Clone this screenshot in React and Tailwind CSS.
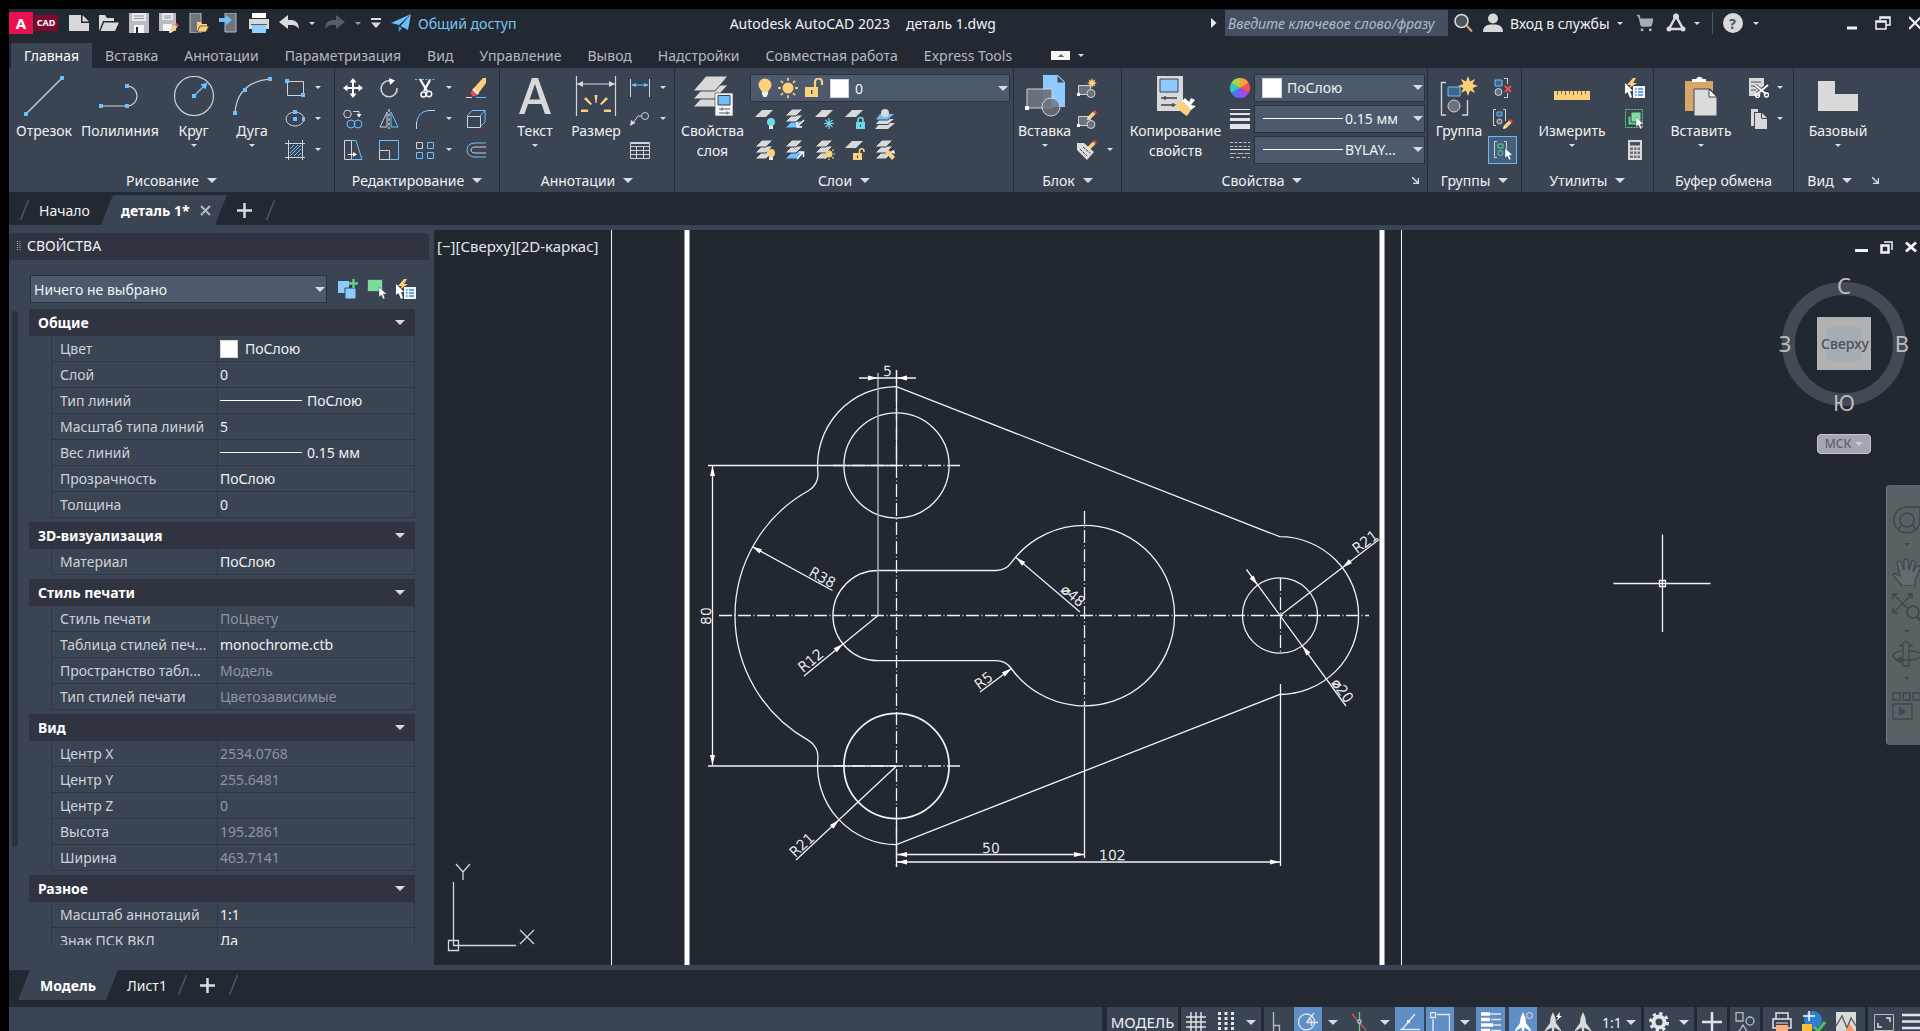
import { ShoppingCart } from "lucide-react"

/* ---------- small shared pieces ---------- */

function Ico({ w = 20, h = 20, box, className = "", children }) {
  return (
    <svg
      width={w}
      height={h}
      viewBox={box || `0 0 ${w} ${h}`}
      fill="none"
      stroke="none"
      aria-hidden="true"
      className={`shrink-0 ${className}`}
    >
      {children}
    </svg>
  )
}

function Caret({ size = 8, className = "text-[#d9dce0]" }) {
  return (
    <svg width={size} height={size / 2} viewBox="0 0 8 4" aria-hidden="true" className={`shrink-0 ${className}`}>
      <path d="M0 0H8L4 4Z" fill="currentColor" />
    </svg>
  )
}

function Tool({ label, className = "", children }) {
  return (
    <button type="button" aria-label={label} className={`flex items-center justify-center ${className}`}>
      {children}
    </button>
  )
}

function Plus() {
  return (
    <Ico w={15} h={15}>
      <path d="M7.500 0V15M0 7.500H15" stroke="#d9dce0" strokeWidth="2.500" />
    </Ico>
  )
}

function Slash() {
  return (
    <Ico w={9} h={20}>
      <path d="M8.500 0L.5 20" stroke="#4d5664" strokeWidth="1.500" />
    </Ico>
  )
}

const Pencil = ({ x = 10, y = 10 }) => (
  <g transform={`translate(${x} ${y})`}>
    <path d="M0 10L1 6.500L6 1.500L8.500 4L3.500 9Z" fill="#fdd17c" />
    <path d="M6 1.500L7.500 0L10 2.500L8.500 4Z" fill="#ef4b56" />
    <path d="M0 10L1 6.500L3.500 9Z" fill="#f3ead7" />
  </g>
)

const Cursor = ({ x = 10, y = 8 }) => (
  <path
    transform={`translate(${x} ${y})`}
    d="M0 0V10L2.300 8L4.200 12L6 11.200L4.200 7.300L7.500 7.100Z"
    fill="#fff"
    stroke="#3b4453"
    strokeWidth=".4"
  />
)

const Star = ({ x, y, s = 1 }) => (
  <path
    transform={`translate(${x} ${y}) scale(${s})`}
    d="M0-10L2-4.500L7-7L4.600-2L10 0L4.600 2L7 7L2 4.500L0 10L-2 4.500L-7 7L-4.600 2L-10 0L-4.600-2L-7-7L-2-4.500Z"
    fill="#fdd17c"
  />
)

const Bulb = ({ x, y, fill = "#fdd17c" }) => (
  <g transform={`translate(${x} ${y})`}>
    <circle cx="4" cy="4" r="4" fill={fill} />
    <path d="M2 7.500H6V11H2Z" fill="#e8e8e8" />
  </g>
)

const Sun = ({ x, y, s = 1 }) => (
  <g transform={`translate(${x} ${y}) scale(${s})`}>
    <circle r="5" fill="#fdd17c" />
    <path
      d="M0-9V-6.500M0 9V6.500M-9 0H-6.500M9 0H6.500M-6.400-6.400L-4.600-4.600M6.400 6.400L4.600 4.600M-6.400 6.400L-4.600 4.600M6.400-6.400L4.600-4.600"
      stroke="#fdd17c"
      strokeWidth="1.600"
    />
  </g>
)

const Lock = ({ x, y, fill = "#fdd17c", open }) => (
  <g transform={`translate(${x} ${y})`}>
    <path d="M0 5H9V12H0Z" fill={fill} />
    <path d={open ? "M6.500 5V2.500A2.300 2.300 0 0 1 11 2.500V4" : "M2 5V3A2.500 2.500 0 0 1 7 3V5"} stroke={fill} strokeWidth="1.600" />
    <path d="M4 7.500H5V10H4Z" fill="#3b4453" />
  </g>
)

const Sheet = ({ y, fill = "#d9d9d9" }) => <path d={`M7 ${y}H18L11 ${y + 7}H0Z`} fill={fill} />

const Stack = ({ mid = "#d9d9d9" }) => (
  <g stroke="#3b4453" strokeWidth="1">
    <Sheet y={12} fill={mid} />
    <Sheet y={6} />
    <Sheet y={0} />
  </g>
)

/* ---------- title bar ---------- */

function TitleBar() {
  return (
    <header className="flex h-[34px] shrink-0 items-center bg-[#232932] pb-[6px] text-[14px] text-[#f0f2f4]">
      <div className="flex h-[22px] w-[49px] shrink-0 items-center">
        <span className="flex h-[22px] w-6 items-center justify-center bg-[#e8114f] text-[15px] font-bold text-white">A</span>
        <span className="ml-px flex h-4 w-6 items-center justify-center bg-[#7d0a2e] text-[9px] font-bold text-white">CAD</span>
      </div>

      <div className="ml-[11px] flex items-center gap-[10px]">
        <Tool label="Создать">
          <Ico>
            <path d="M0 2H12V10H20V18H0Z" fill="#d9d9d9" />
            <path d="M13.500 2L20 8.500H13.500Z" fill="#d9d9d9" />
          </Ico>
        </Tool>
        <Tool label="Открыть">
          <Ico>
            <path d="M0 18V2H6L8 5H15V8H4Z" fill="#d9d9d9" />
            <path d="M5 9.500H20L16 18H1.500Z" fill="#d9d9d9" />
          </Ico>
        </Tool>
        <Tool label="Сохранить">
          <Ico>
            <path d="M0 0H3V8H17V0H20V20H0Z" fill="#b9bcc0" />
            <path d="M3 0H17V8H3Z" fill="#e9e9e9" />
            <path d="M5 3H15M5 5.500H15" stroke="#8f949b" />
            <path d="M5 12H15V20H5Z" fill="#f4f4f4" />
            <path d="M7 14H9V20H7Z" fill="#232932" />
          </Ico>
        </Tool>
        <Tool label="Сохранить как">
          <Ico>
            <path d="M0 0H17V18H0Z" fill="#b9bcc0" />
            <path d="M3 0H14V7H3Z" fill="#e9e9e9" />
            <path d="M5 3H12M5 5H12" stroke="#8f949b" />
            <path d="M4 11H13V18H4Z" fill="#f4f4f4" />
            <Pencil x={10} y={10} />
          </Ico>
        </Tool>
        <Tool label="Открыть с мобильных устройств">
          <Ico>
            <path d="M1 0H12V20H1Z" fill="#70757c" stroke="#b9bcc0" />
            <path d="M8 18V9H12L13 11H18V13H11Z" fill="#fdd17c" />
            <path d="M11 13H20L17 19H8Z" fill="#fdd17c" stroke="#232932" strokeWidth=".6" />
          </Ico>
        </Tool>
        <Tool label="Сохранить на мобильных устройствах">
          <Ico>
            <path d="M6 0H17V19H6Z" fill="#70757c" stroke="#b9bcc0" />
            <path d="M0 5H7V2L13 7L7 12V9H0Z" fill="#6cc0ff" />
          </Ico>
        </Tool>
        <Tool label="Печать">
          <Ico>
            <path d="M3 0H17V5H3Z" fill="#fff" />
            <path d="M0 6H20V16H0Z" fill="#d9d9d9" />
            <path d="M3 12H17V20H3Z" fill="#8fd0ff" />
            <path d="M2 11.500H18" stroke="#555c66" />
          </Ico>
        </Tool>
        <Tool label="Отменить">
          <Ico>
            <path d="M0 9L9 2V7H13Q20 8 20 16Q17 12 13 12H9V16Z" fill="#d9d9d9" />
          </Ico>
        </Tool>
        <Tool label="Список отмены">
          <Caret size={6} />
        </Tool>
        <Tool label="Повторить">
          <Ico>
            <path d="M20 9L11 2V7H7Q0 8 0 16Q3 12 7 12H11V16Z" fill="#565d67" />
          </Ico>
        </Tool>
        <Tool label="Список повтора">
          <Caret size={6} className="text-[#9a9fa7]" />
        </Tool>
        <Tool label="Адаптация панели">
          <Ico w={10} h={12}>
            <path d="M0 2H10" stroke="#d9d9d9" strokeWidth="2" />
            <path d="M0 5.500H10L5 11Z" fill="#d9d9d9" />
          </Ico>
        </Tool>
        <button type="button" className="flex items-center gap-[7px] text-[#7cc4f5]">
          <Ico>
            <path d="M0 10L20 1L8 12Z" fill="#6cc0ff" />
            <path d="M20 1L17 17L9.500 13Z" fill="#6cc0ff" />
            <path d="M7.500 13L8 19L11 15Z" fill="#4a9fdc" />
          </Ico>
          Общий доступ
        </button>
      </div>

      <h1 className="ml-auto flex gap-4 whitespace-nowrap">
        <span>Autodesk AutoCAD 2023</span>
        <span>деталь 1.dwg</span>
      </h1>

      <div className="ml-auto flex h-full w-[711px] shrink-0 items-center">
        <Ico w={6} h={10} className="ml-[2px]">
          <path d="M0 0V10L5.500 5Z" fill="#e8eaec" />
        </Ico>
        <input
          type="text"
          aria-label="Поиск"
          placeholder="Введите ключевое слово/фразу"
          className="ml-[8px] h-[26px] w-[223px] bg-[#454f62] px-[3px] italic outline-none placeholder:text-[#b4b9c2]"
        />
        <Tool label="Найти" className="ml-[6px]">
          <Ico>
            <circle cx="7.500" cy="8" r="6.500" fill="#4b535f" stroke="#d9d9d9" strokeWidth="1.600" />
            <path d="M13 13L18 18.500" stroke="#d7a878" strokeWidth="2" />
          </Ico>
        </Tool>
        <button type="button" className="ml-[9px] flex items-center gap-[7px] whitespace-nowrap">
          <Ico>
            <circle cx="10" cy="5.500" r="5" fill="#d9d9d9" />
            <path d="M0 19Q0 12 7 11.500H13Q20 12 20 19Z" fill="#d9d9d9" />
          </Ico>
          Вход в службы
          <Caret size={6} />
        </button>
        <Tool label="Магазин приложений" className="ml-[13px]">
          <ShoppingCart size={18} color="#a9adb3" fill="#a9adb3" strokeWidth={2} />
        </Tool>
        <Tool label="Autodesk" className="ml-[12px]">
          <Ico>
            <path d="M10 3L3 16H17Z" stroke="#d9d9d9" strokeWidth="2.500" />
            <circle cx="10" cy="3.500" r="3" fill="#d9d9d9" />
            <circle cx="3" cy="16" r="2.500" fill="#d9d9d9" />
            <circle cx="17" cy="16" r="2.500" fill="#d9d9d9" />
          </Ico>
        </Tool>
        <Caret size={6} className="ml-[8px] text-[#d9dce0]" />
        <span className="ml-[12px] h-[22px] w-px bg-[#4d5664]" />
        <Tool label="Справка" className="ml-[10px] h-5 w-5 rounded-full bg-[#d9d9d9] font-bold text-[#4b535f]">
          ?
        </Tool>
        <Caret size={6} className="ml-[10px] text-[#d9dce0]" />
        <div className="ml-auto flex shrink-0 items-center gap-[18px]">
          <Tool label="Свернуть">
            <Ico w={10} h={14}>
              <path d="M0 12H10" stroke="#f0f2f4" strokeWidth="3" />
            </Ico>
          </Tool>
          <Tool label="Восстановить">
            <Ico w={16} h={14}>
              <path d="M5 4V1H15V9H11M5 2H15M1 5H11V13H1ZM1 6H11" stroke="#f0f2f4" strokeWidth="1.500" />
            </Ico>
          </Tool>
          <Tool label="Закрыть">
            <Ico w={11} h={14}>
              <path d="M0 1L12 13M12 1L0 13" stroke="#f0f2f4" strokeWidth="2" />
            </Ico>
          </Tool>
        </div>
      </div>
    </header>
  )
}

const RIBBON_TABS = [
  "Главная",
  "Вставка",
  "Аннотации",
  "Параметризация",
  "Вид",
  "Управление",
  "Вывод",
  "Надстройки",
  "Совместная работа",
  "Express Tools",
]

function RibbonTabs() {
  return (
    <nav className="flex h-[25px] shrink-0 items-center bg-[#232932] pl-[2px] text-[14px]">
      {RIBBON_TABS.map((tab, i) => (
        <button
          key={tab}
          type="button"
          className={`h-full px-[13px] whitespace-nowrap ${i === 0 ? "bg-[#3b4453] text-white" : "text-[#b4b8bf]"}`}
        >
          {tab}
        </button>
      ))}
      <button type="button" aria-label="Свернуть ленту" className="ml-[26px] flex items-center gap-2">
        <span className="flex h-[9px] w-[19px] items-center justify-center bg-[#f4f4f4]">
          <Caret size={6} className="rotate-180 text-[#555c66]" />
        </span>
        <Caret size={6} />
      </button>
    </nav>
  )
}

/* ---------- ribbon ---------- */

function Panel({ title, width, caret = true, launcher, children }) {
  return (
    <section className={`flex shrink-0 flex-col border-r border-[#262c37] ${width}`}>
      <div className="flex h-[102px] pt-1">{children}</div>
      <div className="flex h-5 items-center justify-center">
        <button type="button" className="flex items-center gap-[8px] whitespace-nowrap">
          {title}
          {caret && <Caret size={10} />}
        </button>
        {launcher && (
          <Tool label={`Параметры: ${title}`} className={launcher}>
            <Ico w={7} h={7}>
              <path d="M0 0L6 6M6.500 1V6.500H1" stroke="#d9dce0" strokeWidth="1.400" />
            </Ico>
          </Tool>
        )}
      </div>
    </section>
  )
}

function BigButton({ label, width, caret, children }) {
  return (
    <button type="button" className={`flex shrink-0 flex-col items-center pt-1 ${width}`}>
      <span className="flex h-10 items-center">{children}</span>
      <span className="mt-[5px] text-center leading-5">{label}</span>
      {caret && <Caret className="mt-[3px] text-[#d9dce0]" size={6} />}
    </button>
  )
}

const SQ = "#6cc0ff"
const LN = "#d0d3d7"

function DrawPanel() {
  return (
    <Panel title="Рисование" width="w-[326px]">
      <BigButton label="Отрезок" width="ml-[3px] w-[64px]">
        <Ico w={40} h={40}>
          <path d="M2 38L38 2" stroke={LN} strokeWidth="1.200" />
          <path d="M0 36H4V40H0ZM36 0H40V4H36Z" fill={SQ} />
        </Ico>
      </BigButton>
      <BigButton label="Полилиния" width="w-[88px]">
        <Ico w={44} h={40}>
          <path d="M3 30H29A10 10 0 0 0 29 10" stroke={LN} strokeWidth="1.200" />
          <path d="M1 28H5V32H1ZM27 28H31V32H27ZM27 8H31V12H27Z" fill={SQ} />
        </Ico>
      </BigButton>
      <BigButton label="Круг" width="w-[59px]" caret>
        <Ico w={42} h={40}>
          <circle cx="21" cy="20" r="19.500" stroke={LN} strokeWidth="1.200" />
          <path d="M21 20L33 8" stroke={SQ} strokeWidth="1.500" />
          <path d="M19 18H23V22H19ZM34.500 6.500L27.500 8.500L32.500 13.500Z" fill={SQ} />
        </Ico>
      </BigButton>
      <BigButton label="Дуга" width="w-[58px]" caret>
        <Ico w={40} h={40}>
          <path d="M3 37Q5 6 38 3" stroke={LN} strokeWidth="1.200" />
          <path d="M1 35H5V39H1ZM36 1H40V5H36ZM11 12H15V16H11Z" fill={SQ} />
        </Ico>
      </BigButton>
      <div className="ml-[3px] grid grid-cols-[22px_24px] auto-rows-[31px] place-items-center">
        <Tool label="Прямоугольник">
          <Ico>
            <path d="M2.500 3.500H18.500V17.500H2.500Z" stroke={LN} />
            <path d="M0 1H4V5H0ZM16 15H20V19H16Z" fill={SQ} />
          </Ico>
        </Tool>
        <Caret size={6} />
        <Tool label="Эллипс">
          <Ico>
            <ellipse cx="10" cy="10" rx="9" ry="7" stroke={LN} />
            <path d="M8 1H12V5H8ZM8 8H12V12H8ZM17 8H20V12H17Z" fill={SQ} />
          </Ico>
        </Tool>
        <Caret size={6} />
        <Tool label="Штриховка">
          <Ico>
            <path d="M3.500 0V20M17.500 0V20M0 3.500H20M0 17.500H20" stroke={LN} />
            <path d="M5 9L9 5M5 13L13 5M5 16L16 5M9 16L16 9M13 16L16 13" stroke={SQ} />
          </Ico>
        </Tool>
        <Caret size={6} />
      </div>
    </Panel>
  )
}

function ModifyPanel() {
  return (
    <Panel title="Редактирование" width="w-[165px]">
      <div className="grid grid-cols-[36px_36px_35px_14px_40px] auto-rows-[31px] place-items-center">
        <Tool label="Перенести">
          <Ico>
            <path d="M10 0L13.500 4.500H11V9H15.500V6.500L20 10L15.500 13.500V11H11V15.500H13.500L10 20L6.500 15.500H9V11H4.500V13.500L0 10L4.500 6.500V9H9V4.500H6.500Z" fill="#fff" />
          </Ico>
        </Tool>
        <Tool label="Повернуть">
          <Ico>
            <path d="M12 3A8 8 0 1 0 18 10" stroke={LN} strokeWidth="1.600" />
            <path d="M10 0L16 2.500L11 7Z" fill="#fff" />
          </Ico>
        </Tool>
        <Tool label="Обрезать">
          <Ico>
            <path d="M0 1.500H20" stroke={SQ} strokeDasharray="2 1.500" />
            <path d="M5 1L12 13M15 2L9 13" stroke="#fff" strokeWidth="2.200" />
            <circle cx="14" cy="16" r="2.700" stroke="#fff" strokeWidth="1.500" />
            <circle cx="8.500" cy="16.500" r="2.500" stroke="#fff" strokeWidth="1.500" />
          </Ico>
        </Tool>
        <Caret size={6} />
        <Tool label="Стереть">
          <Ico>
            <path d="M7 11L17 0H20V5L12 16Z" fill="#fdd17c" />
            <path d="M7 11L12 16L9 18.500Q6 19 4.500 15Z" fill="#ef4b56" />
            <path d="M7 11L12 16" stroke="#fff" strokeWidth="1.800" />
            <path d="M0 19.500H6" stroke={LN} />
            <path d="M10 19.500H20" stroke={SQ} />
          </Ico>
        </Tool>
        <Tool label="Копировать">
          <Ico>
            <circle cx="4.500" cy="5" r="3.800" stroke={LN} />
            <path d="M10 2.500H16V6" stroke={LN} />
            <path d="M13.500 5H18.500L16 8.500Z" fill="#fff" />
            <circle cx="8" cy="15" r="4" stroke={SQ} />
            <circle cx="15" cy="15" r="4" stroke={SQ} />
          </Ico>
        </Tool>
        <Tool label="Зеркало">
          <Ico>
            <path d="M8 3V18H1Z" stroke={LN} />
            <path d="M12 3V18H19Z" stroke={SQ} />
            <path d="M10 0V20" stroke="#fff" strokeDasharray="3 1.500" />
          </Ico>
        </Tool>
        <Tool label="Сопряжение">
          <Ico>
            <path d="M1.500 14Q3 2 14 1.500" stroke={SQ} />
            <path d="M1.500 20V13M13 1.500H20" stroke={LN} />
          </Ico>
        </Tool>
        <Caret size={6} />
        <Tool label="Выдавить">
          <Ico>
            <path d="M1 7L6 1.500H19V13L14 18M14 7L19 1.500" stroke={SQ} />
            <path d="M1.500 7.500H14.500V18.500H1.500Z" stroke={LN} />
          </Ico>
        </Tool>
        <Tool label="Растянуть">
          <Ico>
            <path d="M1.500 .5H8.500V19.500H1.500Z" stroke={LN} />
            <path d="M8.500 .5H13L19 19.500H8.500" stroke={SQ} />
            <path d="M5 14.500H11" stroke="#fff" />
            <path d="M10 12V17L14 14.500Z" fill="#fff" />
          </Ico>
        </Tool>
        <Tool label="Масштаб">
          <Ico>
            <path d="M.5 10V.5H19.500V19.500H10" stroke={SQ} />
            <path d="M.5 10.500H10.500V19.500H.5Z" stroke={LN} />
          </Ico>
        </Tool>
        <Tool label="Массив">
          <Ico>
            <path d="M1.500 2.500H7.500V8.500H1.500Z" stroke={LN} />
            <path d="M12.500 2.500H18.500V8.500H12.500ZM1.500 12.500H7.500V18.500H1.500ZM12.500 12.500H18.500V18.500H12.500Z" stroke={SQ} />
          </Ico>
        </Tool>
        <Caret size={6} />
        <Tool label="Подобие">
          <Ico>
            <path d="M20 3H8Q1 4 1 10Q1 16 8 17H20" stroke={SQ} />
            <path d="M20 7H10Q5 7 5 10Q5 13 10 13H20" stroke={LN} />
          </Ico>
        </Tool>
      </div>
    </Panel>
  )
}

function AnnotationPanel() {
  return (
    <Panel title="Аннотации" width="w-[175px]">
      <BigButton label="Текст" width="ml-[5px] w-[60px]" caret>
        <Ico w={34} h={40}>
          <path d="M1 38L14 2H20L33 38H27L23.500 28H10L6.500 38ZM11.500 23.500H22L17 8Z" fill="#d9d9d9" />
        </Ico>
      </BigButton>
      <BigButton label="Размер" width="w-[62px]">
        <Ico w={42} h={40}>
          <path d="M1.500 0V40M40.500 0V40M2 8H40" stroke={LN} strokeWidth="1.200" />
          <path d="M2 8L8 5V11ZM40 8L34 5V11Z" fill="#d9d9d9" />
          <path d="M6 33.500H13V36H6ZM29 33.500H36V36H29ZM19.500 19H22.500L21.500 27H20.500ZM9 23L11 21L17 28L15.500 29ZM33 23L31 21L25 28L26.500 29Z" fill="#fdd17c" />
        </Ico>
      </BigButton>
      <div className="grid grid-cols-[26px_20px] auto-rows-[31px] place-items-center">
        <Tool label="Линейный размер">
          <Ico>
            <path d="M.5 1V19M19.500 1V19" stroke={LN} />
            <path d="M2 7H18" stroke={SQ} />
            <path d="M1 7L6 5V9ZM19 7L14 5V9Z" fill={SQ} />
          </Ico>
        </Tool>
        <Caret size={6} />
        <Tool label="Выноска">
          <Ico>
            <circle cx="15" cy="7" r="3.500" stroke={LN} />
            <path d="M12 7H8L3 14" stroke={LN} />
            <path d="M0 17L1 11L5.500 14Z" fill="#d9d9d9" />
          </Ico>
        </Tool>
        <Caret size={6} />
        <Tool label="Таблица">
          <Ico>
            <path d="M.5 2.500H19.500V18.500H.5ZM.5 6.500H19.500M.5 10.500H19.500M.5 14.500H19.500M6.500 6V18M13.500 6V18" stroke={LN} />
            <path d="M1 3H19" stroke={LN} strokeWidth="2" />
          </Ico>
        </Tool>
      </div>
    </Panel>
  )
}

const LAYER_TOOLS = [
  ["Отключить слой", <g key="a"><Sheet y={1} /><Bulb x={12} y={9} fill="#6edbe8" /></g>],
  ["Изолировать", <g key="b"><Stack mid="#6cc0ff" /><path d="M19 11L12 18M12 13V18H17" stroke="#fff" strokeWidth="1.400" /></g>],
  ["Заморозить", <g key="c"><Sheet y={1} /><path d="M14 9V20M9 14.500H19M10.500 11L17.500 18M17.500 11L10.500 18" stroke="#6edbe8" strokeWidth="1.200" /></g>],
  ["Блокировать", <g key="d"><Sheet y={1} /><Lock x={11} y={8} fill="#6edbe8" /></g>],
  ["Сделать текущим", <g key="e"><path d="M5 14H20L13 20H0Z" fill="#d9d9d9" /><path d="M5 9.500H20L13 15.500H0Z" fill="#d9d9d9" stroke="#3b4453" /><path d="M5 4.500H20L13 11H0Z" fill="#6cc0ff" stroke="#3b4453" /><circle cx="10" cy="4" r="4" fill="#d9d9d9" /></g>],
  ["Включить все слои", <g key="f"><Stack /><Bulb x={12} y={9} /></g>],
  ["Отменить изоляцию", <g key="g"><Stack mid="#6cc0ff" /><path d="M12 19L18 12M13.500 12H18.500V17" stroke="#fff" strokeWidth="1.400" /></g>],
  ["Разморозить все", <g key="h"><Stack /><Sun x={14} y={14} s={0.7} /></g>],
  ["Разблокировать", <g key="i"><Sheet y={1} /><Lock x={8} y={8} open /></g>],
  ["Копировать свойства слоя", <g key="j"><Stack /><path d="M10 12L14 10L20 17L17 20Z" fill="#fdd17c" /><path d="M15 12L19 10L20 14Z" fill="#fff" /></g>],
]

function Swatch({ className = "h-[20px] w-[20px]" }) {
  return <span className={`shrink-0 border border-[#d0d3d7] bg-white ${className}`} />
}

function Picker({ label, value, className = "", children }) {
  return (
    <div className={`relative flex h-7 items-center border border-[#2a313d] bg-[#4d596c] ${className}`}>
      {children}
      <select aria-label={label} defaultValue={value} className="h-full min-w-0 flex-1 appearance-none bg-transparent text-[#f0f2f4] outline-none">
        <option>{value}</option>
      </select>
      <Caret size={10} className="pointer-events-none absolute right-px text-[#d9dce0]" />
    </div>
  )
}

function LayersPanel() {
  return (
    <Panel title="Слои" width="w-[339px]">
      <BigButton label={<>Свойства<br />слоя</>} width="w-[75px]">
        <Ico w={40} h={40}>
          <g fill="#d9d9d9" stroke="#3b4453">
            <path d="M13 17H35L22 31H0Z" />
            <path d="M13 9H35L22 23H0Z" />
            <path d="M13 0H35L22 15H0Z" />
          </g>
          <path d="M22 17H40V40H22Z" fill="#f4f4f4" stroke="#3b4453" strokeWidth=".6" />
          <path d="M25 19.500H37V29H25Z" fill="#6cc0ff" stroke="#3b4453" />
          <path d="M26 33H37M26 37H37M29 31.500V34.500M34 35.500V38.500" stroke="#555c66" />
        </Ico>
      </BigButton>
      <div className="flex flex-col">
        <Picker label="Слой" value="0" className="mt-[2px] w-[260px] gap-[6px] pl-[7px]">
          <Ico w={14} h={20}>
            <circle cx="7" cy="7" r="6.500" fill="#fdd17c" />
            <path d="M4 14H10V16L8.500 19H5.500L4 16Z" fill="#f4f4f4" />
            <path d="M3.500 11H10.500V14H3.500Z" fill="#fdd17c" />
          </Ico>
          <Ico>
            <Sun x={10} y={10} s={1.1} />
          </Ico>
          <Ico>
            <path d="M1 9H14V19H1Z" fill="#fdd17c" />
            <path d="M11 9V4A3.500 3.500 0 0 1 18 4V7" stroke="#fdd17c" strokeWidth="2.200" />
            <path d="M7 12H8.500V16H7Z" fill="#4d596c" />
          </Ico>
          <Swatch className="h-[19px] w-[19px]" />
        </Picker>
        <div className="mt-px grid w-[150px] grid-cols-5 auto-rows-[31px] place-items-center">
          {LAYER_TOOLS.map(([label, icon]) => (
            <Tool key={label} label={label}>
              <Ico>{icon}</Ico>
            </Tool>
          ))}
        </div>
      </div>
    </Panel>
  )
}

const MiniBlock = () => (
  <g>
    <path d="M1.500 7.500H13.500V16.500H1.500Z" fill="#6d737d" stroke={LN} />
    <circle cx="14" cy="15.500" r="4" fill="#6d737d" stroke={LN} />
    <path d="M0 15H3V18H0Z" fill="#fff" />
  </g>
)

function BlockPanel() {
  return (
    <Panel title="Блок" width="w-[108px]">
      <BigButton label="Вставка" width="w-[61px]" caret>
        <Ico w={42} h={42}>
          <path d="M19 0H34L41 7V32H19Z" fill="#8ccaff" />
          <path d="M33 0V8H41Z" fill="#3b4453" stroke="#8ccaff" />
          <path d="M3 14H28V33H3Z" fill="#6d737d" fillOpacity=".95" stroke={LN} />
          <circle cx="27" cy="32" r="9" fill="#6d737d" fillOpacity=".8" stroke={LN} />
          <path d="M1 31H5V35H1Z" fill="#fff" />
        </Ico>
      </BigButton>
      <div className="ml-px grid grid-cols-[22px_24px] auto-rows-[31px] place-items-center">
        <Tool label="Создать блок">
          <Ico>
            <MiniBlock />
            <Star x={15} y={5} s={0.5} />
          </Ico>
        </Tool>
        <span />
        <Tool label="Редактор блоков">
          <Ico>
            <MiniBlock />
            <Pencil x={10} y={1} />
          </Ico>
        </Tool>
        <span />
        <Tool label="Атрибуты">
          <Ico>
            <path d="M0 3H7L17 12L10 20L0 10Z" fill="#d9d9d9" />
            <path d="M3 9L10 16M6 7L13 13" stroke="#3b4453" strokeDasharray="3 1" />
            <Pencil x={10} y={0} />
          </Ico>
        </Tool>
        <Caret size={6} />
      </div>
    </Panel>
  )
}

function PropertiesPanel() {
  return (
    <Panel title="Свойства" width="w-[306px]" launcher="ml-[110px] -mr-[92px]">
      <BigButton label={<>Копирование<br />свойств</>} width="w-[107px]">
        <Ico w={42} h={40}>
          <path d="M2 0H28V35H2Z" fill="#d9d9d9" />
          <path d="M5 3H23V16H5Z" fill="#8ccaff" stroke="#3b4453" />
          <path d="M6 22H22M6 29H22M10 20V24M18 27V31" stroke="#3b4453" strokeWidth="1.400" />
          <path d="M20 29L27 25L36 34L32 40Q25 36 20 29Z" fill="#fdd17c" />
          <path d="M27 25L36 34L41 30L36 29L40 24L36 22L34 26L30 22Z" fill="#fff" />
        </Ico>
      </BigButton>
      <div className="ml-px grid grid-cols-[24px_171px] auto-rows-[31px] items-center">
        <Ico>
          <path d="M10 10L10 0A10 10 0 0 1 18.700 5Z" fill="#ff9d3c" />
          <path d="M10 10L18.700 5A10 10 0 0 1 18.700 15Z" fill="#f0565b" />
          <path d="M10 10L18.700 15A10 10 0 0 1 10 20Z" fill="#a04df0" />
          <path d="M10 10V20A10 10 0 0 1 1.300 15Z" fill="#5a6cf0" />
          <path d="M10 10L1.300 15A10 10 0 0 1 1.300 5Z" fill="#33c6c9" />
          <path d="M10 10L1.300 5A10 10 0 0 1 10 0Z" fill="#a6d845" />
        </Ico>
        <Picker label="Цвет" value="ПоСлою" className="gap-[5px] pl-[7px]">
          <Swatch />
        </Picker>
        <Ico>
          <path d="M0 .5H20" stroke="#e3e5e8" />
          <path d="M0 5H20" stroke="#e3e5e8" strokeWidth="2" />
          <path d="M0 10.500H20" stroke="#e3e5e8" strokeWidth="3" />
          <path d="M0 17.500H20" stroke="#e3e5e8" strokeWidth="5" />
        </Ico>
        <Picker label="Вес линий" value="0.15 мм" className="gap-[2px] pl-[8px]">
          <span className="h-px w-20 shrink-0 bg-white" />
        </Picker>
        <Ico>
          <path d="M0 2.500H20M0 6.500H20" stroke="#b9bcc0" strokeDasharray="3 1.500" />
          <path d="M0 9.500H20" stroke="#e3e5e8" />
          <path d="M0 13.500H20" stroke="#b9bcc0" strokeDasharray="6 1.500" />
          <path d="M0 17.500H20" stroke="#b9bcc0" strokeDasharray="4 2" />
        </Ico>
        <Picker label="Тип линий" value="BYLAY..." className="gap-[2px] pl-[8px]">
          <span className="h-px w-20 shrink-0 bg-white" />
        </Picker>
      </div>
    </Panel>
  )
}

function GroupsPanel() {
  return (
    <Panel title="Группы" width="w-[94px]">
      <BigButton label="Группа" width="ml-[2px] w-[58px]">
        <Ico w={40} h={40}>
          <path d="M7 6.500H2.500V39H7M23 39H28.500V24" stroke={LN} strokeWidth="1.400" />
          <path d="M9 11H21V20H9Z" fill="#3f6385" stroke={SQ} />
          <circle cx="15" cy="30" r="6" fill="#6d737d" stroke={LN} />
          <Star x={29} y={10} />
        </Ico>
      </BigButton>
      <div className="grid auto-rows-[31px] place-items-center">
        <Tool label="Разгруппировать" className="w-[29px]">
          <Ico>
            <path d="M2 2H9V8H2Z" fill="#3f6385" stroke={SQ} />
            <circle cx="5.500" cy="14" r="3.500" fill="#6d737d" stroke={LN} />
            <path d="M11 .5H14.500V6M11 19.500H14.500V15" stroke={LN} />
            <path d="M12 8L18 14M18 8L12 14" stroke="#ef4b56" strokeWidth="2.200" />
          </Ico>
        </Tool>
        <Tool label="Редактировать группу" className="w-[29px]">
          <Ico>
            <path d="M3 .5H.5V16.500H3M10 .5H12.500V12" stroke={LN} />
            <path d="M4 3H9V7H4Z" fill="#3f6385" stroke={SQ} />
            <circle cx="6.500" cy="12.500" r="2.500" fill="#6d737d" stroke={LN} />
            <Pencil x={10} y={10} />
          </Ico>
        </Tool>
        <Tool label="Выбор групп" className="h-[28px] w-[29px] border border-[#6cb8f0] bg-[#46607c]">
          <Ico>
            <path d="M4 1.500H1.500V17.500H4M11 1.500H13.500V9" stroke={LN} />
            <path d="M5 4H10V8H5Z" stroke="#62d28a" />
            <circle cx="7.500" cy="13" r="2.500" stroke="#62d28a" />
            <Cursor x={12} y={8} />
          </Ico>
        </Tool>
      </div>
    </Panel>
  )
}

const QuickSelect = () => (
  <g>
    <path d="M8 0L2 7H6L3 11L12 5H8L11 0Z" fill="#fdd17c" />
    <path d="M0 5V16L2.500 14L5 20L7 19L5 13H8Z" fill="#fff" />
    <path d="M8 8H20V20H8Z" fill="#f4f4f4" />
    <path d="M10 11H11.500M10 14H11.500M10 17H11.500M13 11H18M13 14H18M13 17H18" stroke="#2f8fe0" strokeWidth="1.400" />
  </g>
)

function UtilitiesPanel() {
  return (
    <Panel title="Утилиты" width="w-[132px]">
      <BigButton label="Измерить" width="w-[100px]" caret>
        <Ico w={36} h={10}>
          <path d="M0 0H36V9H0Z" fill="#fdd17c" />
          <path d="M3.500 0V4M7.500 0V3M11.500 0V4M15.500 0V3M19.500 0V4M23.500 0V3M27.500 0V4M31.500 0V3" stroke="#7d6a44" />
        </Ico>
      </BigButton>
      <div className="ml-[3px] grid auto-rows-[31px] place-items-center">
        <Tool label="Быстрый выбор">
          <Ico>
            <QuickSelect />
          </Ico>
        </Tool>
        <Tool label="Выбрать все">
          <Ico>
            <path d="M.5 .5H17.500V18.500H.5Z" stroke="#62d28a" strokeDasharray="2 1" />
            <path d="M3 7H12V16H3Z" fill="#62d28a" stroke="#3b4453" />
            <path d="M6 3H16V13H6Z" fill="#7ee0a2" stroke="#3b4453" />
            <Cursor x={11} y={8} />
          </Ico>
        </Tool>
        <Tool label="Калькулятор">
          <Ico>
            <path d="M3 0H17V20H3Z" fill="#d9d9d9" />
            <path d="M5 2H15V5.500H5Z" fill="#4b535f" />
            <path d="M5 7.500H8V10H5ZM9 7.500H11.500V10H9ZM12.500 7.500H15V10H12.500ZM5 11.500H8V14H5ZM9 11.500H11.500V14H9ZM12.500 11.500H15V14H12.500ZM5 15.500H8V18H5ZM9 15.500H11.500V18H9ZM12.500 15.500H15V18H12.500Z" fill="#6d737d" />
          </Ico>
        </Tool>
      </div>
    </Panel>
  )
}

function ClipboardPanel() {
  return (
    <Panel title="Буфер обмена" width="w-[140px]" caret={false}>
      <BigButton label="Вставить" width="w-[94px]" caret>
        <Ico w={34} h={40}>
          <path d="M1 5H29V35H1Z" fill="#d6a66d" />
          <path d="M8 6V3H12Q14 0 17 1L19 3H22V6Z" fill="#fff" />
          <path d="M10 13H26L33 20V40H10Z" fill="#dcdcdc" stroke="#3b4453" />
          <path d="M25 13V21H33Z" fill="#fff" stroke="#3b4453" />
        </Ico>
      </BigButton>
      <div className="grid grid-cols-[22px_20px] auto-rows-[31px] place-items-center">
        <Tool label="Вырезать">
          <Ico>
            <path d="M0 0H15V10L10 18H0Z" fill="#d9d9d9" />
            <path d="M2 4H12M2 8H8M2 12H7" stroke="#4b535f" />
            <path d="M6 7L17 16M18 7L8 16" stroke="#3b4453" strokeWidth="3.500" />
            <path d="M6 7L17 16M19 7L8 16" stroke="#fff" strokeWidth="1.800" />
            <circle cx="8.500" cy="17.500" r="2" stroke="#fff" strokeWidth="1.400" />
            <circle cx="17.500" cy="17" r="2" stroke="#fff" strokeWidth="1.400" />
          </Ico>
        </Tool>
        <Caret size={6} />
        <Tool label="Копировать в буфер">
          <Ico>
            <path d="M2 0H9V3H5V17H2Z" fill="#d9d9d9" />
            <path d="M6 4H13L18 9V20H6Z" fill="#d9d9d9" />
            <path d="M12.500 4V9.500H18" stroke="#3b4453" />
          </Ico>
        </Tool>
        <Caret size={6} />
      </div>
    </Panel>
  )
}

function Ribbon() {
  return (
    <div className="flex h-[124px] shrink-0 overflow-hidden bg-[#3b4453] text-[14px] text-[#f0f2f4]">
      <DrawPanel />
      <ModifyPanel />
      <AnnotationPanel />
      <LayersPanel />
      <BlockPanel />
      <PropertiesPanel />
      <GroupsPanel />
      <UtilitiesPanel />
      <ClipboardPanel />
      <Panel title="Вид" width="w-[98px] border-r-0" launcher="ml-5">
        <BigButton label="Базовый" width="w-[88px]" caret>
          <Ico w={40} h={40}>
            <path d="M0 5H17V18H40V35H0Z" fill="#d9d9d9" />
          </Ico>
        </BigButton>
      </Panel>
    </div>
  )
}

function FileTabs() {
  return (
    <nav className="flex h-[33px] shrink-0 items-end bg-[#232932] text-[14px] text-[#f0f2f4]">
      <div className="flex h-[30px] items-center">
        <span className="ml-[11px]">
          <Slash />
        </span>
        <button type="button" className="ml-[10px] w-[62px] text-left">
          Начало
        </button>
        <div className="flex h-full w-[126px] items-center bg-[#3b4453] pl-5 [clip-path:polygon(12px_0,100%_0,calc(100%-12px)_100%,0_100%)]">
          <button type="button" className="font-bold text-white">
            деталь 1*
          </button>
          <Tool label="Закрыть вкладку" className="ml-[10px]">
            <Ico w={11} h={11}>
              <path d="M1 1L10 10M10 1L1 10" stroke="#b4b8bf" strokeWidth="2" />
            </Ico>
          </Tool>
        </div>
        <Tool label="Новый чертеж" className="ml-[10px]">
          <Plus />
        </Tool>
        <span className="ml-[14px]">
          <Slash />
        </span>
      </div>
    </nav>
  )
}

/* ---------- properties palette ---------- */

const LineSample = () => <span className="h-px w-[82px] shrink-0 bg-white" />

const SECTIONS = [
  {
    title: "Общие",
    rows: [
      { name: "Цвет", value: "ПоСлою", lead: <Swatch className="mr-[2px] h-[18px] w-[18px]" /> },
      { name: "Слой", value: "0" },
      { name: "Тип линий", value: "ПоСлою", lead: <LineSample /> },
      { name: "Масштаб типа линий", value: "5" },
      { name: "Вес линий", value: "0.15 мм", lead: <LineSample /> },
      { name: "Прозрачность", value: "ПоСлою" },
      { name: "Толщина", value: "0" },
    ],
  },
  { title: "3D-визуализация", rows: [{ name: "Материал", value: "ПоСлою" }] },
  {
    title: "Стиль печати",
    rows: [
      { name: "Стиль печати", value: "ПоЦвету", dim: true },
      { name: "Таблица стилей печ...", value: "monochrome.ctb" },
      { name: "Пространство табл...", value: "Модель", dim: true },
      { name: "Тип стилей печати", value: "Цветозависимые", dim: true },
    ],
  },
  {
    title: "Вид",
    rows: [
      { name: "Центр X", value: "2534.0768", dim: true },
      { name: "Центр Y", value: "255.6481", dim: true },
      { name: "Центр Z", value: "0", dim: true },
      { name: "Высота", value: "195.2861", dim: true },
      { name: "Ширина", value: "463.7141", dim: true },
    ],
  },
  {
    title: "Разное",
    rows: [
      { name: "Масштаб аннотаций", value: "1:1" },
      { name: "Знак ПСК ВКЛ", value: "Да" },
    ],
  },
]

function PropertySection({ title, rows }) {
  return (
    <section>
      <button type="button" className="flex h-[27px] w-full items-center justify-between bg-[#2f3440] pr-[10px] pl-[9px] font-bold text-white">
        {title}
        <Caret size={10} />
      </button>
      <table className="ml-[22px] w-[364px] table-fixed border-separate border-spacing-0 border-l border-[#2f3744]">
        <tbody>
          {rows.map((row) => (
            <tr key={row.name} className="h-[26px]">
              <th scope="row" className="w-[166px] overflow-hidden border-r border-b border-[#2f3744] p-0 pl-2 text-left font-normal whitespace-nowrap text-[#cfd2d7]">
                {row.name}
              </th>
              <td className={`border-r border-b border-[#2f3744] p-0 pl-[2px] ${row.dim ? "text-[#8f959f]" : "text-[#f0f2f4]"}`}>
                <span className="flex h-[25px] items-center gap-[5px]">
                  {row.lead}
                  {row.value}
                </span>
              </td>
            </tr>
          ))}
        </tbody>
      </table>
    </section>
  )
}

function Palette() {
  return (
    <aside className="flex w-[425px] shrink-0 flex-col pb-5 text-[14px] text-[#f0f2f4]">
      <h2 className="mt-[3px] mr-[5px] flex h-[27px] shrink-0 items-center gap-[6px] rounded-t bg-[#2f3440] pb-[2px] pl-2">
        <Ico w={4} h={10}>
          <path d="M.5 0V10M3 0V10" stroke="#b4b8bf" strokeDasharray="1 1" />
        </Ico>
        СВОЙСТВА
      </h2>
      <div className="mt-[15px] flex shrink-0 items-center pl-[21px]">
        <Picker label="Выбранные объекты" value="Ничего не выбрано" className="w-[297px] pl-[3px]" />
        <div className="ml-[11px] flex gap-[9px]">
          <Tool label="Переключить PICKADD">
            <Ico>
              <path d="M0 2H11V14H0Z" fill="#8ccaff" />
              <path d="M7 9H18V20H7Z" fill="#8ccaff" stroke="#3b4453" />
              <path d="M15.500 0V9M11 4.500H20" stroke="#62d28a" strokeWidth="2.400" />
            </Ico>
          </Tool>
          <Tool label="Выбрать объекты">
            <Ico>
              <path d="M.5 .5H15.500V12.500H.5Z" fill="#7edb97" stroke="#3b4453" strokeDasharray="2 1" />
              <Cursor x={12} y={8} />
            </Ico>
          </Tool>
          <Tool label="Быстрый выбор">
            <Ico>
              <QuickSelect />
            </Ico>
          </Tool>
        </div>
      </div>
      <div className="mt-[6px] flex min-h-0 flex-1 overflow-hidden pl-[3px]">
        <div className="mt-[2px] h-[536px] w-[6px] shrink-0 rounded-full bg-[#2c333f]" />
        <div className="ml-[11px] flex w-[386px] shrink-0 flex-col gap-1">
          {SECTIONS.map((s) => (
            <PropertySection key={s.title} {...s} />
          ))}
        </div>
      </div>
    </aside>
  )
}

/* ---------- drawing area ---------- */

// arrow head with its tip at x, y; angle 0 points right
function Arrow({ x, y, a }) {
  return <path d="M0 0L-10-2.500V2.500Z" fill="#fff" stroke="none" transform={`translate(${x} ${y}) rotate(${a})`} />
}

// dimension text standing on a line through x, y
function DimText({ x, y, a = 0, children }) {
  return (
    <text
      transform={`translate(${x} ${y}) rotate(${a})`}
      strokeWidth=".4"
      className="fill-[#f4f5f6] font-['DejaVu_Sans'] text-[14px] font-extralight"
    >
      {children}
    </text>
  )
}

const DASH = "13 2.500 1 2.500"

function Drawing() {
  return (
    <svg
      viewBox="434 230 1486 735"
      preserveAspectRatio="xMinYMin slice"
      className="h-full w-full"
      fill="none"
      stroke="#f0f2f4"
      strokeWidth="1.300"
      role="img"
      aria-label="Чертеж детали"
    >
      {/* sheet frame */}
      <path d="M611.500 230V965M1401.500 230V965" strokeWidth="1" />
      <path d="M687 230V965M1382 230V965" stroke="#fff" strokeWidth="5" />

      {/* part outline */}
      <path d="M896.500 386.600A78.900 78.900 0 0 0 817.900 472.700A18.800 18.800 0 0 1 808.400 490.800A142.800 142.800 0 0 0 808.400 740.400A18.800 18.800 0 0 1 817.900 758.500A78.900 78.900 0 0 0 896.500 844.600L1279.700 694.500A78.900 78.900 0 0 0 1279.700 536.700Z" />
      <path d="M878 570.500H996.100A18.800 18.800 0 0 0 1011.300 562.700A90.200 90.200 0 1 1 1011.300 668.500A18.800 18.800 0 0 0 996.100 660.700H878A45.100 45.100 0 0 1 878 570.500Z" />
      <circle cx="896.500" cy="465.500" r="52.600" />
      <circle cx="896.500" cy="766" r="52.600" strokeWidth="1.700" />
      <circle cx="1280" cy="615.500" r="37.600" />

      {/* centre lines */}
      <g strokeDasharray={DASH}>
        <path d="M719 615.500H1369M896.500 370V867M1084.500 511V706M1280.500 578V653M833 465.500H961M833 766H961" />
      </g>

      {/* extension lines */}
      <path d="M878 373V615" stroke="#a3a7ac" strokeWidth="1.600" />
      <path d="M896.500 370V465M896.500 820V867M1084.500 707V858M1280.500 684V866M708 465.500H896M708 766H896" />

      {/* linear dimensions */}
      <path d="M859 378H916M712.500 466V765M897 854.500H1084M897 862H1280" />
      <Arrow x={878} y={378} a={0} />
      <Arrow x={897} y={378} a={180} />
      <Arrow x={712.5} y={466} a={-90} />
      <Arrow x={712.5} y={765} a={90} />
      <Arrow x={897} y={854.5} a={180} />
      <Arrow x={1084} y={854.5} a={0} />
      <Arrow x={897} y={862} a={180} />
      <Arrow x={1280} y={862} a={0} />
      <DimText x={883} y={376}>5</DimText>
      <DimText x={711} y={625} a={-90}>80</DimText>
      <DimText x={982} y={853}>50</DimText>
      <DimText x={1099} y={860}>102</DimText>

      {/* radial dimensions */}
      <path d="M752 546.500L832.500 590.500M878 615.500L804 676M1011.500 668.500L980 692M896.500 766L796 860M1016 557.500L1080 612M1246.500 569.500L1346 706M1280 615.500L1379 539.500" />
      <Arrow x={752} y={546.5} a={209} />
      <Arrow x={843} y={644} a={-39} />
      <Arrow x={1011.5} y={668.5} a={-36} />
      <Arrow x={839} y={820} a={-43} />
      <Arrow x={1016} y={557.5} a={220} />
      <Arrow x={1257.5} y={585} a={54} />
      <Arrow x={1302.5} y={646} a={234} />
      <Arrow x={1342.5} y={567.5} a={142} />
      <DimText x={808} y={575} a={29}>R38</DimText>
      <DimText x={803} y={673} a={-39}>R12</DimText>
      <DimText x={979} y={690} a={-36}>R5</DimText>
      <DimText x={795} y={858} a={-43}>R21</DimText>
      <DimText x={1060} y={591} a={40}>⌀48</DimText>
      <DimText x={1331} y={683} a={54}>⌀20</DimText>
      <DimText x={1357} y={554} a={-37}>R21</DimText>

      {/* UCS icon */}
      <path d="M453.500 882V945.500H516M448.500 940.500H458.500V950.500H448.500ZM520 930L534 944M534 930L520 944M456 864L463 872L470 864M463 872V880" stroke="#d3d6da" />

      {/* crosshair */}
      <path d="M1613.500 583.500H1710.500M1662.500 534.500V632M1659.500 580.500H1665.500V586.500H1659.500Z" />
    </svg>
  )
}

function ViewCube() {
  return (
    <div className="absolute top-[30px] right-0 flex w-[152px] flex-col items-center font-['Noto_Sans']">
      <svg width="152" height="162" viewBox="1768 260 152 162" role="img" aria-label="Видовой куб">
        <circle cx="1844" cy="344" r="55.500" fill="none" stroke="#434a53" strokeWidth="13" />
        <path d="M1817 317H1871V370H1817Z" fill="#b0b2b2" />
        <path d="M1827 327H1861V361H1827Z" fill="#a4adb3" />
        <g textAnchor="middle" className="fill-[#b9bcbf] text-[22px]">
          <text x="1844" y="294">С</text>
          <text x="1785" y="352">З</text>
          <text x="1902" y="352">В</text>
          <text x="1844" y="411">Ю</text>
        </g>
        <text x="1845" y="349" textAnchor="middle" className="fill-[#49525b] text-[14px] font-medium">
          Сверху
        </text>
      </svg>
      <button type="button" className="mt-3 flex h-5 w-[54px] items-center justify-center gap-1 rounded border border-[#c3c6d0] bg-[#a4a7b3] text-[12px] font-medium text-[#5d616c]">
        МСК
        <Caret size={8} className="text-[#c9ccd6]" />
      </button>
    </div>
  )
}

function NavBar() {
  return (
    <div className="absolute top-[255px] right-0 h-[260px] w-[34px] overflow-hidden rounded-l border-l border-[#757b7f] bg-[#5a6165]">
      <div className="flex w-10 flex-col items-center text-[#40464c]">
        <Tool label="Штурвал" className="mt-[21px]">
          <Ico w={28} h={28}>
            <path d="M14 1H27V14A13 13 0 1 1 14 1Z" stroke="#40464c" strokeWidth="1.500" />
            <circle cx="14" cy="14" r="7" stroke="#40464c" strokeWidth="1.500" />
            <path d="M9 19L5 23M19 19L23 23" stroke="#40464c" strokeWidth="1.500" />
          </Ico>
        </Tool>
        <Caret size={6} className="mt-[9px] text-[#40464c]" />
        <Tool label="Панорамирование" className="mt-3">
          <Ico w={30} h={28}>
            <path d="M10 28L1 17Q2 14 6 17L8 18L5 5Q6 2 9 4L12 12L12 2Q14 0 16 2L17 12L20 3Q23 2 23 5L21 14L25 8Q29 7 28 11L23 23V28Z" stroke="#40464c" strokeWidth="1.300" fill="#646b6f" />
          </Ico>
        </Tool>
        <Tool label="Показать до границ" className="mt-[7px]">
          <Ico w={30} h={28}>
            <path d="M1 1L20 20M20 1L1 20M1 6V1H6M15 1H20V6M1 15V20H6" stroke="#40464c" strokeWidth="1.500" />
            <circle cx="21" cy="19" r="6" stroke="#40464c" strokeWidth="1.700" fill="#5a6165" />
            <path d="M25 24L29 28" stroke="#40464c" strokeWidth="3" />
          </Ico>
        </Tool>
        <Caret size={6} className="mt-[9px] text-[#40464c]" />
        <Tool label="Орбита" className="mt-[7px]">
          <Ico w={30} h={28}>
            <path d="M11 26V6H8L14 1L20 6H17V26Z" stroke="#40464c" strokeWidth="1.300" />
            <path d="M11 11Q1 12 1 16Q3 21 14 20Q29 20 29 15Q28 11 17 11" stroke="#40464c" strokeWidth="1.500" />
            <path d="M3 20L10 16V24Z" fill="#40464c" />
          </Ico>
        </Tool>
        <Caret size={6} className="mt-[9px] text-[#40464c]" />
        <Tool label="Аниматор движения" className="mt-3">
          <Ico w={30} h={28}>
            <path d="M1 1H8V8H1ZM11 1H18V8H11ZM21 1H28V8H21ZM1 12H20V27H1Z" stroke="#40464c" strokeWidth="1.400" />
            <path d="M7 15V24L15 19.500Z" fill="#40464c" />
          </Ico>
        </Tool>
      </div>
    </div>
  )
}

function Canvas() {
  return (
    <main className="relative min-w-0 flex-1 overflow-hidden bg-[#222830]">
      <Drawing />
      <div className="absolute top-1 left-[3px] text-[15px] leading-6 text-[#e3e5e8]">[−][Сверху][2D-каркас]</div>
      <div className="absolute top-[11px] right-[3px] flex items-center gap-3">
        <Tool label="Свернуть вид">
          <Ico w={13} h={13}>
            <path d="M0 8H13V11H0Z" fill="#f0f2f4" />
          </Ico>
        </Tool>
        <Tool label="Восстановить вид">
          <Ico w={13} h={13}>
            <path d="M4 1H12V9" stroke="#f0f2f4" strokeWidth="1.500" />
            <path d="M1.500 4.500H8.500V11.500H1.500Z" stroke="#f0f2f4" strokeWidth="2.500" />
          </Ico>
        </Tool>
        <Tool label="Закрыть вид">
          <Ico w={12} h={13}>
            <path d="M1 1.500L11 10.500M11 1.500L1 10.500" stroke="#f0f2f4" strokeWidth="3" />
          </Ico>
        </Tool>
      </div>
      <ViewCube />
      <NavBar />
    </main>
  )
}

/* ---------- bottom bars ---------- */

function LayoutTabs() {
  return (
    <nav className="flex h-[37px] shrink-0 items-start bg-[#232932] text-[14px] text-[#f0f2f4]">
      <div className="flex h-[30px] items-center">
        <button
          type="button"
          className="ml-[9px] h-full w-[100px] bg-[#3b4453] font-bold text-white [clip-path:polygon(12px_0,100%_0,calc(100%-12px)_100%,0_100%)]"
        >
          Модель
        </button>
        <button type="button" className="ml-[9px] w-[51px] text-left">
          Лист1
        </button>
        <Slash />
        <Tool label="Новый лист" className="ml-[13px]">
          <Plus />
        </Tool>
        <span className="ml-[14px]">
          <Slash />
        </span>
      </div>
    </nav>
  )
}

function Cell({ label, on, width = "w-[30px]", children }) {
  return (
    <Tool label={label} className={`h-[30px] shrink-0 ${width} ${on ? "bg-[#5f8fc4]" : ""}`}>
      {children}
    </Tool>
  )
}

function CellGroup({ className = "", children }) {
  return <div className={`flex h-[30px] shrink-0 items-center bg-[#3b4453] ${className}`}>{children}</div>
}

const W = "#e3e5e8"

const PERSON = "M10 0L12.500 6L13 11L18 18V19.500L11.500 15.500L10.800 20H9.200L8.500 15.500L2 19.500V18L7 11L7.500 6Z"

function StatusBar() {
  return (
    <footer className="flex h-6 shrink-0 items-start gap-[3px] overflow-hidden bg-[#232932] text-[14px] text-[#f0f2f4]">
      <div className="h-[30px] flex-1 bg-[#3b4453]" />
      <CellGroup className="ml-[2px]">
        <button type="button" className="h-[29px] w-[71px] text-[15px]">
          МОДЕЛЬ
        </button>
      </CellGroup>
      <CellGroup>
        <Cell label="Сетка">
          <Ico>
            <path d="M5 0V20M10 0V20M15 0V20M0 5H20M0 10H20M0 15H20" stroke={W} strokeWidth="1.400" />
          </Ico>
        </Cell>
        <Cell label="Шаговая привязка">
          <Ico w={16} h={20}>
            <path d="M0 1.500H16M0 6.500H16M0 11.500H16M0 16.500H16" stroke={W} strokeWidth="3" strokeDasharray="3 3.500" />
          </Ico>
        </Cell>
        <Cell label="Режим привязки" width="w-5">
          <Caret size={10} />
        </Cell>
      </CellGroup>
      <CellGroup>
        <Cell label="Ортогональный режим">
          <Ico w={16}>
            <path d="M2.500 0V20M2.500 13.500H8.500V20" stroke="#b9bcc0" strokeWidth="1.300" />
          </Ico>
        </Cell>
        <Cell label="Полярное отслеживание" on width="w-[28px]">
          <Ico>
            <circle cx="8.500" cy="10" r="8" stroke={W} strokeWidth="1.300" />
            <path d="M8.500 10.500H20M8.500 10.500L16 1M13.500 14V9Q12.500 6.500 10.500 6" stroke={W} strokeWidth="1.300" />
          </Ico>
        </Cell>
        <Cell label="Углы" width="w-[22px]">
          <Caret size={10} />
        </Cell>
        <Cell label="Изометрия">
          <Ico>
            <path d="M3 2L17 18" stroke="#d9505a" strokeWidth="1.300" />
            <path d="M10.500 0V20" stroke="#62d28a" strokeWidth="1.300" />
            <path d="M9 8H12V11H9Z" stroke={W} fill="#3b4453" />
          </Ico>
        </Cell>
        <Cell label="Изометрические плоскости" width="w-[21px]">
          <Caret size={10} />
        </Cell>
        <Cell label="Объектное отслеживание" on width="w-[29px]">
          <Ico>
            <path d="M2 17.500L15 2M0 17.500H20" stroke={W} strokeWidth="1.500" />
            <path d="M7 8H10V11H7Z" fill="#fff" />
          </Ico>
        </Cell>
        <Cell label="Объектная привязка" on width="ml-[2px] w-[28px]">
          <Ico>
            <path d="M.5 .5H5.500V5.500H.5ZM7 2.500H19.500V20M3 7V20" stroke={W} strokeWidth="1.400" />
          </Ico>
        </Cell>
        <Cell label="Режимы привязки" width="w-[22px]">
          <Caret size={10} />
        </Cell>
        <Cell label="Отображать вес линий" on width="w-[29px]">
          <Ico>
            <path d="M0 2H20M10 7.500H20M12 13H20M10 18.500H20" stroke={W} strokeWidth="1.500" />
            <path d="M0 2H9M0 7.500H9M0 13H12M0 18.500H9" stroke="#fff" strokeWidth="3.500" />
          </Ico>
        </Cell>
        <Cell label="Видимость аннотаций" on width="ml-[4px] w-[28px]">
          <Ico>
            <path d={PERSON} fill="#fff" />
            <circle cx="16.500" cy="3.500" r="3" stroke={W} />
          </Ico>
        </Cell>
        <Cell label="Автомасштаб" width="w-[32px]">
          <Ico>
            <path d={PERSON} fill="#d9d9d9" />
            <path d="M17 0L13 5H15.500L13 9L19 4H16.500Z" fill="#fff" />
          </Ico>
        </Cell>
        <Cell label="Аннотативный масштаб" width="w-[28px]">
          <Ico>
            <path d={PERSON} fill="#d9d9d9" />
          </Ico>
        </Cell>
        <button type="button" className="flex h-[29px] w-[44px] items-center justify-center gap-1">
          1:1
          <Caret size={10} />
        </button>
      </CellGroup>
      <CellGroup>
        <Cell label="Рабочее пространство">
          <Ico>
            <circle cx="10" cy="10" r="5.500" stroke={W} strokeWidth="4" />
            <circle cx="10" cy="10" r="8.500" stroke={W} strokeWidth="3" strokeDasharray="3.300 3.375" />
          </Ico>
        </Cell>
        <Cell label="Выбор пространства" width="w-[20px]">
          <Caret size={10} />
        </Cell>
      </CellGroup>
      <CellGroup>
        <Cell label="Монитор аннотаций">
          <Ico>
            <path d="M10 0V20M0 10H20" stroke={W} strokeWidth="2.500" />
          </Ico>
        </Cell>
      </CellGroup>
      <CellGroup>
        <Cell label="Изоляция объектов">
          <Ico>
            <path d="M1 .5H8V9H1ZM8 13L13 21H3Z" stroke="#b9bcc0" strokeWidth="1.300" />
            <circle cx="15" cy="9" r="4" stroke="#b9bcc0" strokeWidth="1.300" />
          </Ico>
        </Cell>
      </CellGroup>
      <CellGroup className="w-[102px] justify-evenly">
        <Cell label="Печать" width="w-[24px]">
          <Ico>
            <path d="M4 7V1H16V7M1 7H19V16H1Z" stroke={W} strokeWidth="1.500" />
            <path d="M4 13H16V20H4Z" fill="#ffb07a" />
            <path d="M4 11H16" stroke={W} />
          </Ico>
        </Cell>
        <Cell label="Геопозиция" width="w-[26px]">
          <Ico w={24} h={22}>
            <circle cx="11" cy="9" r="9" fill="#2f7fd0" />
            <path d="M0 13H10V22H0Z" fill="#fdbf3c" />
            <path d="M7 0V10M1 5H13" stroke="#fff" strokeWidth="1.500" />
            <path d="M12 16L16 20L23 11" stroke="#4fc063" strokeWidth="3" />
          </Ico>
        </Cell>
        <Cell label="Аппаратное ускорение" width="w-[24px]">
          <Ico>
            <path d="M0 0H20V20H0Z" fill="#d9d9d9" />
            <path d="M0 14L6 4L11 16L15 6L20 14" stroke="#555c66" strokeWidth="1.400" />
            <path d="M14 12L19 20H9Z" fill="#ff9a66" />
          </Ico>
        </Cell>
      </CellGroup>
      <CellGroup className="w-[52px]">
        <Cell label="Очистить экран" width="w-[32px]">
          <Ico>
            <path d="M.5 2.500H19.500V18.500H.5Z" stroke="#b9bcc0" />
            <path d="M12 6H16V10M8 15H4V11" stroke={W} strokeWidth="1.500" />
          </Ico>
        </Cell>
        <Cell label="Адаптация" width="w-[20px]">
          <Ico w={20}>
            <path d="M2 3H20M2 9.500H20M2 16H20" stroke={W} strokeWidth="2.500" />
          </Ico>
        </Cell>
      </CellGroup>
    </footer>
  )
}

export default function App() {
  return (
    <div className="flex h-screen flex-col overflow-hidden bg-black pt-[9px] pl-[9px] font-['Noto_Sans','Open_Sans',sans-serif]">
      <TitleBar />
      <RibbonTabs />
      <Ribbon />
      <FileTabs />
      <div className="flex min-h-0 flex-1 bg-[#3b4453] py-[5px]">
        <Palette />
        <Canvas />
      </div>
      <LayoutTabs />
      <StatusBar />
    </div>
  )
}
